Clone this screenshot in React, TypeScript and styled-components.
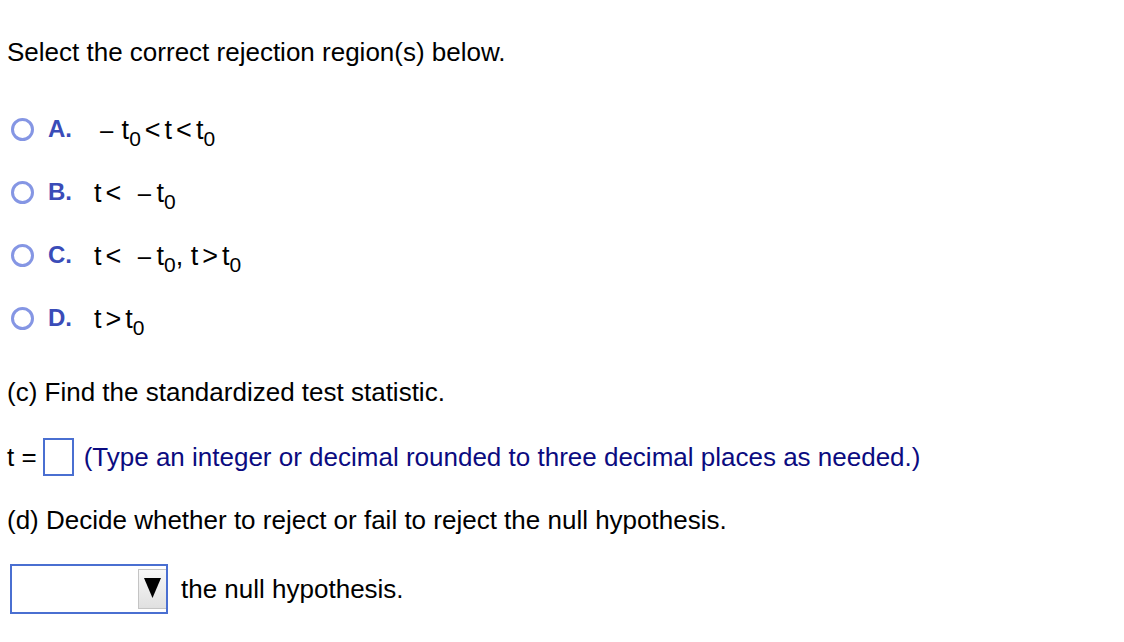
import React from "react";
import styled, { createGlobalStyle } from "styled-components";

const GlobalStyle = createGlobalStyle`
  body {
    margin: 0;
    background: #ffffff;
    font-family: "Liberation Sans", Arial, sans-serif;
    color: #000000;
  }
`;

const Page = styled.div`
  padding: 37px 0 0 7px;
  display: flex;
  flex-direction: column;
  font-size: 26px;
`;

const Line = styled.div<{ $top: number }>`
  line-height: 30px;
  height: 30px;
  margin-top: ${({ $top }) => $top}px;
  white-space: nowrap;
`;

const Options = styled.div`
  display: flex;
  flex-direction: column;
  margin-top: 47px;
  gap: 33px;
`;

const OptionRow = styled.label`
  display: flex;
  align-items: center;
  height: 30px;
`;

const Radio = styled.span`
  width: 17px;
  height: 17px;
  border-radius: 50%;
  border: 3px solid #8596e4;
  margin-left: 4px;
  flex: none;
`;

const Letter = styled.span`
  font-weight: bold;
  color: #3a4cb8;
  font-size: 24px;
  margin-left: 14px;
  width: 46px;
  flex: none;
`;

const MathText = styled.span`
  font-size: 27px;
  white-space: pre;
  position: relative;
  top: 1px;
`;

const Sub = styled.sub`
  font-size: 21px;
  vertical-align: -7px;
  line-height: 0;
`;

const Op = styled.span`
  margin: 0 4px;
`;

const Minus = styled.span<{ $lead?: boolean }>`
  font-family: "DejaVu Sans", sans-serif;
  font-size: 21px;
  margin: 0 ${({ $lead }) => ($lead ? 6 : 3)}px 0 ${({ $lead }) => ($lead ? 4 : 3)}px;
`;

const AnswerRow = styled.div`
  display: flex;
  align-items: center;
  height: 38px;
  margin-top: 31px;
  white-space: nowrap;
`;

const AnswerBox = styled.span`
  width: 31px;
  height: 38px;
  box-sizing: border-box;
  border: 2px solid #4a6fd1;
  margin: 0 10px 0 6px;
  flex: none;
`;

const Hint = styled.span`
  color: #0b0b80;
`;

const DecisionRow = styled.div`
  display: flex;
  align-items: center;
  margin-top: 29px;
  margin-left: 3px;
`;

const Select = styled.div`
  width: 158px;
  height: 50px;
  box-sizing: border-box;
  border: 2px solid #4a6fd1;
  display: flex;
  justify-content: flex-end;
  align-items: flex-start;
  padding-top: 3px;
  flex: none;
`;

const Arrow = styled.div`
  width: 28px;
  height: 40px;
  box-sizing: border-box;
  border: 1px solid #c4c4c4;
  border-right: none;
  background: linear-gradient(#f8f8f8, #e0e0e0);
  display: flex;
  justify-content: center;
  padding-top: 7px;
`;

const Tail = styled.span`
  margin-left: 13px;
`;

const t0 = (
  <>
    t<Sub>0</Sub>
  </>
);

const options = [
  {
    letter: "A.",
    expr: (
      <>
        <Minus $lead>−</Minus>
        {t0}
        <Op>&lt;</Op>t<Op>&lt;</Op>
        {t0}
      </>
    ),
  },
  {
    letter: "B.",
    expr: (
      <>
        t<Op>&lt;</Op> <Minus>−</Minus>
        {t0}
      </>
    ),
  },
  {
    letter: "C.",
    expr: (
      <>
        t<Op>&lt;</Op> <Minus>−</Minus>
        {t0}, t<Op>&gt;</Op>
        {t0}
      </>
    ),
  },
  {
    letter: "D.",
    expr: (
      <>
        t<Op>&gt;</Op>
        {t0}
      </>
    ),
  },
];

export default function App() {
  return (
    <>
      <GlobalStyle />
      <Page>
        <Line $top={0}>Select the correct rejection region(s) below.</Line>
        <Options>
          {options.map((o) => (
            <OptionRow key={o.letter}>
              <Radio />
              <Letter>{o.letter}</Letter>
              <MathText>{o.expr}</MathText>
            </OptionRow>
          ))}
        </Options>
        <Line $top={44}>(c) Find the standardized test statistic.</Line>
        <AnswerRow>
          t =<AnswerBox />
          <Hint>(Type an integer or decimal rounded to three decimal places as needed.)</Hint>
        </AnswerRow>
        <Line $top={29}>(d) Decide whether to reject or fail to reject the null hypothesis.</Line>
        <DecisionRow>
          <Select>
            <Arrow>
              <svg width="17" height="21" viewBox="0 0 17 21">
                <path d="M0 1 H17 L8.5 21 Z" fill="#000" />
              </svg>
            </Arrow>
          </Select>
          <Tail>the null hypothesis.</Tail>
        </DecisionRow>
      </Page>
    </>
  );
}
